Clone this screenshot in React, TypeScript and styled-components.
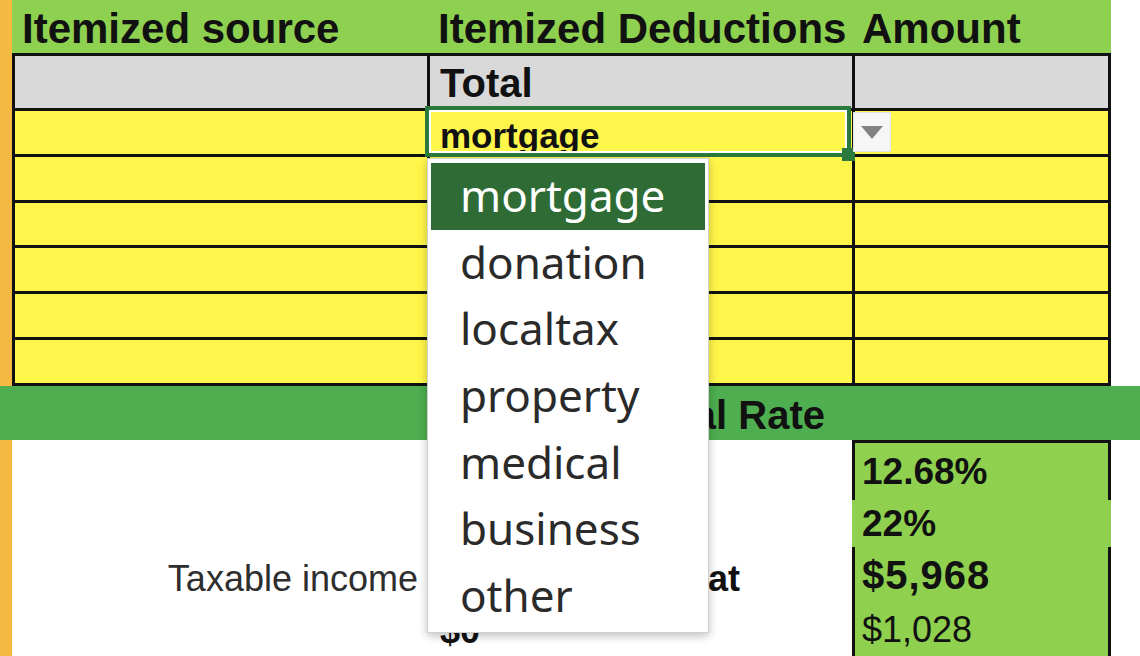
import React from "react";
import styled, { createGlobalStyle, css } from "styled-components";

const GlobalStyle = createGlobalStyle`
  html, body {
    margin: 0;
    padding: 0;
    background: #ffffff;
  }
  body {
    font-family: "Liberation Sans", Arial, sans-serif;
    color: #111;
  }
`;

const Sheet = styled.div`
  width: 1140px;
  height: 656px;
  overflow: hidden;
  background: #ffffff;
  display: flex;
  flex-direction: column;
`;

const TopArea = styled.div`
  display: flex;
  height: 386px;
`;

const OrangeStrip = styled.div`
  width: 12px;
  flex: none;
  background: #f6b942;
`;

const Table = styled.div`
  width: 1099px;
  display: flex;
  flex-direction: column;
`;

const HeaderRow = styled.div`
  height: 53px;
  display: grid;
  grid-template-columns: 418px 425px 256px;
  background: #8ed04f;
`;

const HeaderCell = styled.div<{ $pad: number }>`
  display: flex;
  align-items: center;
  padding-left: ${(p) => p.$pad}px;
  padding-top: 5px;
  font-size: 42px;
  font-weight: bold;
  white-space: nowrap;
  color: #111;
`;

const Grid = styled.div`
  display: grid;
  grid-template-columns: 415px 425px 256px;
  grid-template-rows: 55px repeat(6, 45.8px);
  border-left: 3px solid #111;
  border-top: 3px solid #111;
`;

const Cell = styled.div<{ $tone: "grey" | "yellow" }>`
  position: relative;
  box-sizing: border-box;
  border-right: 3px solid #111;
  border-bottom: 3px solid #111;
  background: ${(p) => (p.$tone === "grey" ? "#d9d9d9" : "#fff64b")};
  display: flex;
  align-items: center;
  padding-left: 10px;
`;

const TotalText = styled.span`
  font-size: 40px;
  font-weight: bold;
  color: #111;
  padding-top: 3px;
`;

const CellValue = styled.span`
  align-self: flex-start;
  margin-top: 5px;
  font-size: 35px;
  font-weight: bold;
  color: #111;
  line-height: 40px;
  height: 35px;
  overflow: hidden;
`;

const Selection = styled.div`
  position: absolute;
  top: -5px;
  left: -5px;
  right: 1px;
  bottom: -3px;
  border: 4px solid #2b7a3d;
  box-shadow: inset 0 0 0 2px #ffffff;
  pointer-events: none;
  z-index: 2;
`;

const FillHandle = styled.div`
  position: absolute;
  right: -3px;
  bottom: -7px;
  width: 13px;
  height: 13px;
  background: #2b7a3d;
  z-index: 3;
`;

const ArrowButton = styled.div`
  position: absolute;
  left: calc(100% + 1px);
  top: 1px;
  width: 38px;
  height: 40px;
  background: #f6f6f6;
  border: 1px solid #e2e2e2;
  box-sizing: border-box;
  display: flex;
  align-items: center;
  justify-content: center;
  z-index: 3;
  &::before {
    content: "";
    border-left: 11px solid transparent;
    border-right: 11px solid transparent;
    border-top: 13px solid #828282;
  }
`;

const Menu = styled.ul`
  position: absolute;
  top: 47px;
  left: -3px;
  width: 282px;
  height: 475px;
  box-sizing: border-box;
  margin: 0;
  padding: 4px 3px;
  list-style: none;
  background: #ffffff;
  border: 1px solid #cfcfcf;
  box-shadow: 0 3px 9px rgba(0, 0, 0, 0.25);
  z-index: 5;
`;

const MenuItem = styled.li<{ $active?: boolean }>`
  height: 66.7px;
  line-height: 64px;
  padding-left: 29px;
  font-family: "Noto Sans", "Liberation Sans", sans-serif;
  font-size: 44px;
  color: #2a2a2a;
  ${(p) =>
    p.$active &&
    css`
      background: #2e6b35;
      color: #ffffff;
    `}
`;

const Band = styled.div`
  height: 54px;
  flex: none;
  background: #4eae50;
  display: grid;
  grid-template-columns: 855px 1fr;
`;

const BandLabel = styled.div`
  text-align: right;
  padding-right: 30px;
  font-size: 40px;
  font-weight: bold;
  line-height: 58px;
  white-space: nowrap;
  color: #111;
`;

const BottomArea = styled.div`
  display: flex;
  flex: 1;
`;

const BottomGrid = styled.div`
  display: grid;
  grid-template-columns: 415px 425px 259px;
  grid-template-rows: 60px 47px 57px 52px;
`;

const Label = styled.div<{ $align: "left" | "right"; $pad: number; $bold?: boolean }>`
  display: flex;
  align-items: flex-end;
  justify-content: ${(p) => (p.$align === "right" ? "flex-end" : "flex-start")};
  padding-bottom: 4px;
  ${(p) =>
    p.$align === "right"
      ? css`padding-right: ${p.$pad}px;`
      : css`padding-left: ${p.$pad}px;`}
  font-size: 36px;
  font-weight: ${(p) => (p.$bold ? "bold" : "normal")};
  color: ${(p) => (p.$bold ? "#111" : "#2e2e2e")};
  white-space: nowrap;
`;

const ValueCell = styled.div<{ $bordered?: boolean; $first?: boolean }>`
  box-sizing: border-box;
  background: #8fd14f;
  border-left: 3px solid ${(p) => (p.$bordered ? "#111" : "#8fd14f")};
  border-right: 3px solid ${(p) => (p.$bordered ? "#111" : "#8fd14f")};
  border-top: ${(p) => (p.$first ? "3px solid #111" : "none")};
  display: flex;
  align-items: center;
  padding-left: 7px;
`;

const Value = styled.span<{ $size: number; $bold?: boolean; $spacing?: number }>`
  font-size: ${(p) => p.$size}px;
  font-weight: ${(p) => (p.$bold ? "bold" : "normal")};
  letter-spacing: ${(p) => p.$spacing ?? 0}px;
  color: #111;
`;

const options = ["mortgage", "donation", "localtax", "property", "medical", "business", "other"];

export default function App() {
  const yellowRows = [0, 1, 2, 3, 4, 5];

  return (
    <>
      <GlobalStyle />
      <Sheet>
        <TopArea>
          <OrangeStrip />
          <Table>
            <HeaderRow>
              <HeaderCell $pad={10}>Itemized source</HeaderCell>
              <HeaderCell $pad={8}>Itemized Deductions</HeaderCell>
              <HeaderCell $pad={7}>Amount</HeaderCell>
            </HeaderRow>
            <Grid>
              <Cell $tone="grey" />
              <Cell $tone="grey">
                <TotalText>Total</TotalText>
              </Cell>
              <Cell $tone="grey" />
              {yellowRows.map((r) => (
                <React.Fragment key={r}>
                  <Cell $tone="yellow" />
                  <Cell $tone="yellow">
                    {r === 0 && (
                      <>
                        <CellValue>mortgage</CellValue>
                        <Selection />
                        <FillHandle />
                        <ArrowButton />
                        <Menu>
                          {options.map((o, i) => (
                            <MenuItem key={o} $active={i === 0}>
                              {o}
                            </MenuItem>
                          ))}
                        </Menu>
                      </>
                    )}
                  </Cell>
                  <Cell $tone="yellow" />
                </React.Fragment>
              ))}
            </Grid>
          </Table>
        </TopArea>

        <Band>
          <BandLabel>Marginal Rate</BandLabel>
        </Band>

        <BottomArea>
          <OrangeStrip />
          <BottomGrid>
            <div />
            <div />
            <ValueCell $bordered $first>
              <Value $size={37} $bold>12.68%</Value>
            </ValueCell>

            <div />
            <div />
            <ValueCell>
              <Value $size={37} $bold>22%</Value>
            </ValueCell>

            <Label $align="right" $pad={9}>Taxable income</Label>
            <Label $align="right" $pad={112} $bold>Tax owed at</Label>
            <ValueCell $bordered>
              <Value $size={40} $bold $spacing={1}>$5,968</Value>
            </ValueCell>

            <div />
            <Label $align="left" $pad={13} $bold>$0</Label>
            <ValueCell $bordered>
              <Value $size={36}>$1,028</Value>
            </ValueCell>
          </BottomGrid>
        </BottomArea>
      </Sheet>
    </>
  );
}
